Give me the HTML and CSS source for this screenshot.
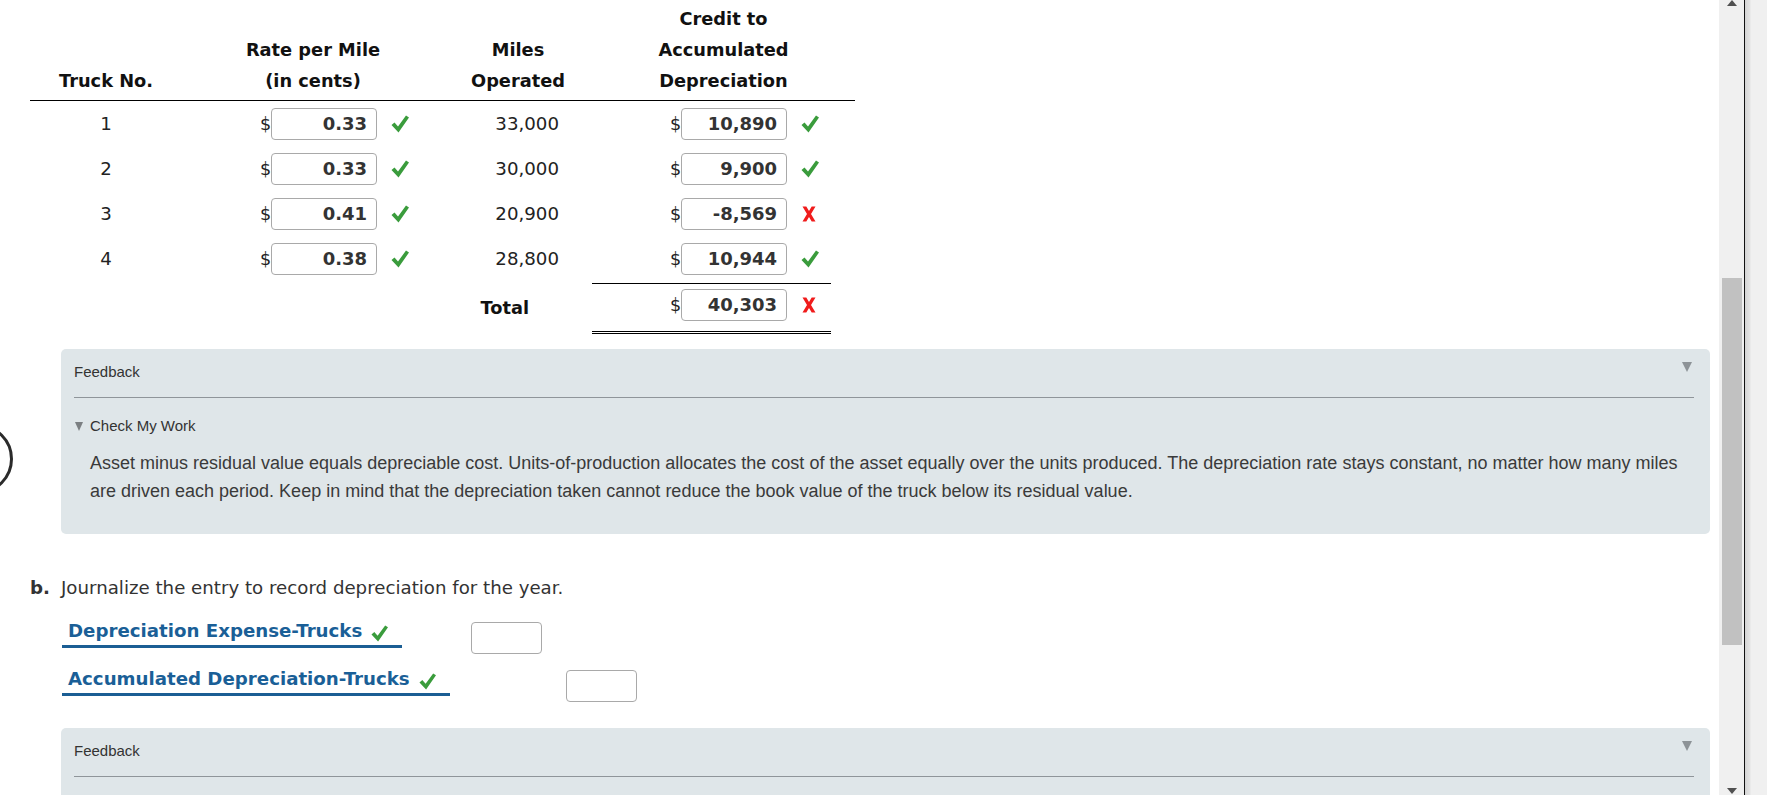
FILE: index.html
```html
<!DOCTYPE html>
<html>
<head>
<meta charset="utf-8">
<title>Depreciation</title>
<link rel="stylesheet" href="styles.css">
</head>
<body>
<div class="viewport">
  <main class="content">
    <div class="circle"></div>

    <div class="ledger">
      <div class="th c1"><span>Truck No.</span></div>
      <div class="th c2"><span>Rate per Mile</span><span>(in cents)</span></div>
      <div class="th c3"><span>Miles</span><span>Operated</span></div>
      <div class="th c4"><span>Credit to</span><span>Accumulated</span><span>Depreciation</span></div>

      <div class="td c1">1</div>
      <div class="td c2"><div class="amt"><span class="cur">$</span><span class="box">0.33</span><svg class="ok" viewBox="0 0 18 18"><polygon points="0.5,10 3.5,7.5 7,11.5 15,0.5 18,2.5 7.5,17.5"/></svg></div></div>
      <div class="td c3">33,000</div>
      <div class="td c4"><div class="amt"><span class="cur">$</span><span class="box">10,890</span><svg class="ok" viewBox="0 0 18 18"><polygon points="0.5,10 3.5,7.5 7,11.5 15,0.5 18,2.5 7.5,17.5"/></svg></div></div>
      <div class="td c5"></div>

      <div class="td c1">2</div>
      <div class="td c2"><div class="amt"><span class="cur">$</span><span class="box">0.33</span><svg class="ok" viewBox="0 0 18 18"><polygon points="0.5,10 3.5,7.5 7,11.5 15,0.5 18,2.5 7.5,17.5"/></svg></div></div>
      <div class="td c3">30,000</div>
      <div class="td c4"><div class="amt"><span class="cur">$</span><span class="box">9,900</span><svg class="ok" viewBox="0 0 18 18"><polygon points="0.5,10 3.5,7.5 7,11.5 15,0.5 18,2.5 7.5,17.5"/></svg></div></div>
      <div class="td c5"></div>

      <div class="td c1">3</div>
      <div class="td c2"><div class="amt"><span class="cur">$</span><span class="box">0.41</span><svg class="ok" viewBox="0 0 18 18"><polygon points="0.5,10 3.5,7.5 7,11.5 15,0.5 18,2.5 7.5,17.5"/></svg></div></div>
      <div class="td c3">20,900</div>
      <div class="td c4"><div class="amt"><span class="cur">$</span><span class="box">-8,569</span><svg class="bad" viewBox="0 0 14 16"><polygon points="0.5,0.5 4.3,0.5 7,5 9.7,0.5 13.5,0.5 9,8 13.5,15.5 9.7,15.5 7,11 4.3,15.5 0.5,15.5 5,8"/></svg></div></div>
      <div class="td c5"></div>

      <div class="td c1">4</div>
      <div class="td c2"><div class="amt"><span class="cur">$</span><span class="box">0.38</span><svg class="ok" viewBox="0 0 18 18"><polygon points="0.5,10 3.5,7.5 7,11.5 15,0.5 18,2.5 7.5,17.5"/></svg></div></div>
      <div class="td c3">28,800</div>
      <div class="td c4"><div class="amt"><span class="cur">$</span><span class="box">10,944</span><svg class="ok" viewBox="0 0 18 18"><polygon points="0.5,10 3.5,7.5 7,11.5 15,0.5 18,2.5 7.5,17.5"/></svg></div></div>
      <div class="td c5"></div>

      <div class="td c1"></div>
      <div class="td c2"></div>
      <div class="td c3 total-label">Total</div>
      <div class="td c4 total"><div class="amt"><span class="cur">$</span><span class="box">40,303</span><svg class="bad" viewBox="0 0 14 16"><polygon points="0.5,0.5 4.3,0.5 7,5 9.7,0.5 13.5,0.5 9,8 13.5,15.5 9.7,15.5 7,11 4.3,15.5 0.5,15.5 5,8"/></svg></div></div>
      <div class="td c5"></div>
    </div>

    <section class="feedback">
      <div class="fb-head"><span>Feedback</span><i class="caret"></i></div>
      <div class="cmw"><i class="caret-sm"></i>Check My Work</div>
      <p class="fb-text">Asset minus residual value equals depreciable cost. Units-of-production allocates the cost of the asset equally over the units produced. The depreciation rate stays constant, no matter how many miles are driven each period. Keep in mind that the depreciation taken cannot reduce the book value of the truck below its residual value.</p>
    </section>

    <p class="prompt"><b class="part">b.</b>Journalize the entry to record depreciation for the year.</p>

    <div class="journal">
      <div class="acct"><span>Depreciation Expense-Trucks</span><svg class="ok" viewBox="0 0 18 18"><polygon points="0.5,10 3.5,7.5 7,11.5 15,0.5 18,2.5 7.5,17.5"/></svg></div>
      <span class="jbox"></span>
      <span></span>
      <div class="acct"><span>Accumulated Depreciation-Trucks</span><svg class="ok" viewBox="0 0 18 18"><polygon points="0.5,10 3.5,7.5 7,11.5 15,0.5 18,2.5 7.5,17.5"/></svg></div>
      <span></span>
      <span class="jbox"></span>
    </div>

    <section class="feedback second">
      <div class="fb-head"><span>Feedback</span><i class="caret"></i></div>
    </section>
  </main>

  <div class="vscroll">
    <i class="arrow up"></i>
    <div class="thumb"></div>
    <i class="arrow down"></i>
  </div>
  <div class="edge"></div>
</div>
</body>
</html>
```

FILE: styles.css
```css
html, body {
  margin: 0;
  padding: 0;
  background: #fff;
}

.viewport {
  display: flex;
  width: 1767px;
  height: 795px;
  overflow: hidden;
}

.content {
  position: relative;
  flex: 0 0 1719px;
  overflow: hidden;
  font-family: "DejaVu Sans", Verdana, sans-serif;
  font-size: 18.2px;
  color: #222;
}

.circle {
  position: absolute;
  left: -57px;
  top: 424px;
  width: 70px;
  height: 70px;
  box-sizing: border-box;
  border: 3px solid #2b2b2b;
  border-radius: 50%;
}

/* ---------- ledger table ---------- */
.ledger {
  display: grid;
  grid-template-columns: 152px 262px 148px 239px 24px;
  grid-template-rows: auto repeat(4, 45px) 53px;
  margin-left: 30px;
  width: 825px;
}

.th {
  display: flex;
  flex-direction: column;
  justify-content: flex-end;
  align-items: center;
  text-align: center;
  font-size: 17.8px;
  font-weight: bold;
  color: #111;
  line-height: 31px;
  padding: 3px 0 4px;
  border-bottom: 1px solid #000;
}

.th.c4 {
  grid-column: span 2;
}

.td {
  display: flex;
  align-items: center;
}

.td.c1 {
  justify-content: center;
}

.td.c2,
.td.c4 {
  padding-left: 78px;
}

.td.c3 {
  justify-content: flex-end;
  padding-right: 33px;
}

.total-label {
  font-size: 17.8px;
  font-weight: bold;
  color: #111;
  padding-right: 63px !important;
}

.td.total {
  align-items: flex-start;
  margin-top: 2px;
  padding-top: 5px;
  box-sizing: border-box;
  border-top: 1px solid #000;
  border-bottom: 3px double #000;
}

.amt {
  display: flex;
  align-items: center;
}

.cur {
  color: #222;
  font-size: 17.5px;
}

.box {
  display: inline-block;
  box-sizing: border-box;
  width: 106px;
  height: 32px;
  border: 1px solid #a9a9a9;
  border-radius: 4px;
  background: #fff;
  text-align: right;
  padding-right: 9px;
  line-height: 30px;
  font-size: 18px;
  font-weight: bold;
  color: #333;
  margin-right: 14px;
}

.ok {
  width: 18px;
  height: 18px;
  fill: #3a9c3c;
}

.bad {
  width: 14px;
  height: 16px;
  fill: #f01c1c;
  margin-left: 1px;
}

/* ---------- feedback ---------- */
.feedback {
  margin: 15px 9px 0 61px;
  background: #dfe6e9;
  border-radius: 5px;
  padding: 13px 16px 29px 13px;
  font-family: "Liberation Sans", Arial, sans-serif;
  color: #333;
}

.fb-head {
  display: flex;
  justify-content: space-between;
  font-size: 15px;
  line-height: 20px;
  padding-bottom: 15px;
  border-bottom: 1px solid #8f959a;
}

.caret {
  align-self: flex-start;
  width: 0;
  height: 0;
  margin-right: 2px;
  border-left: 5.5px solid transparent;
  border-right: 5.5px solid transparent;
  border-top: 10px solid #8d9397;
}

.cmw {
  display: flex;
  align-items: center;
  margin-top: 18px;
  font-size: 15px;
  line-height: 20px;
}

.caret-sm {
  width: 0;
  height: 0;
  margin: 0 7px 0 1px;
  border-left: 4px solid transparent;
  border-right: 4px solid transparent;
  border-top: 9px solid #7b7f82;
}

.fb-text {
  margin: 13px 0 0 16px;
  font-size: 18px;
  line-height: 28px;
  color: #3a3a3a;
}

.feedback.second {
  margin-top: 26px;
}

/* ---------- journal ---------- */
.prompt {
  margin: 40px 0 0 30px;
  line-height: 28px;
  color: #333;
}

.part {
  display: inline-block;
  width: 31px;
}

.journal {
  display: grid;
  grid-template-columns: 409px 95px 72px;
  grid-template-rows: 34px 34px;
  row-gap: 14px;
  margin: 18px 0 0 62px;
}

.acct {
  justify-self: start;
  display: inline-flex;
  align-items: center;
  gap: 9px;
  height: 28px;
  box-sizing: border-box;
  padding: 0 14px 3px 6px;
  border-bottom: 3px solid #1b5e94;
  font-weight: bold;
  color: #1a5f97;
  line-height: 22px;
}

.acct .ok {
  width: 17px;
  height: 17px;
  margin-top: 4px;
}

.jbox {
  display: block;
  box-sizing: border-box;
  width: 71px;
  height: 32px;
  margin-top: 2px;
  border: 1px solid #a9a9a9;
  border-radius: 4px;
  background: #fff;
}

/* ---------- scrollbar ---------- */
.vscroll {
  position: relative;
  flex: 0 0 25px;
  background: #f0f0f0;
}

.thumb {
  position: absolute;
  left: 3px;
  top: 278px;
  width: 20px;
  height: 367px;
  background: #c1c1c1;
}

.arrow {
  position: absolute;
  left: 8px;
  width: 0;
  height: 0;
  border-left: 5px solid transparent;
  border-right: 5px solid transparent;
}

.arrow.up {
  top: 0;
  border-bottom: 6px solid #505050;
}

.arrow.down {
  bottom: 1px;
  border-top: 6px solid #505050;
}

.edge {
  flex: 1 1 auto;
  border-left: 1px solid #111;
  background: linear-gradient(to right, #d4d4d4 0, #e4e4e4 5px, #f0f0f0 6px);
}
```
